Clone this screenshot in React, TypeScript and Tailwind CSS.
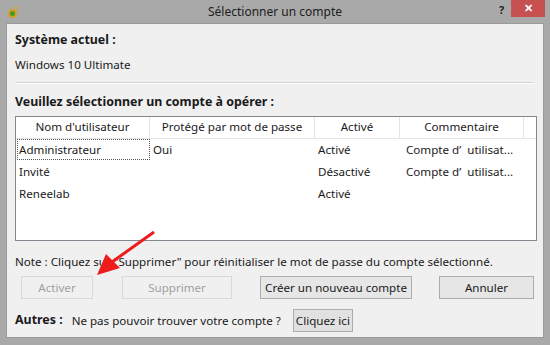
import React from 'react';

const cols = ['w-[134px]', 'w-[165px]', 'w-[85px]', 'w-[124px]'];

const rows = [
  { name: 'Administrateur', pwd: 'Oui', active: 'Activé', comment: 'Compte d’  utilisat...', focus: true },
  { name: 'Invité', pwd: '', active: 'Désactivé', comment: 'Compte d’  utilisat...' },
  { name: 'Reneelab', pwd: '', active: 'Activé', comment: '' },
];

function Btn({ children, disabled, className }: { children: React.ReactNode; disabled?: boolean; className: string }) {
  return (
    <div
      className={
        'h-[23px] flex items-center justify-center border whitespace-nowrap ' +
        (disabled ? 'border-[#d9d9d9] bg-[#f0f0f0] text-[#a0a0a0] ' : 'border-[#adadad] bg-[#e6e6e6] text-[#1a1a1a] ') +
        className
      }
    >
      {children}
    </div>
  );
}

export default function App() {
  return (
    <div
      className="w-[550px] h-[345px] bg-[#a9a9a9] flex flex-col relative overflow-hidden text-[11.6px] text-[#1a1a1a]"
      style={{ fontFamily: '"Noto Sans", "Open Sans", sans-serif' }}
    >
      {/* title bar */}
      <div className="h-[23px] flex items-center relative shrink-0">
        <div className="ml-[8px] mt-[1px] w-[12px] h-[12px] relative">
          <div className="absolute left-0 top-[3px] w-[9px] h-[9px] rounded-full bg-[#4a9a2a] border-2 border-[#d4a020]" />
          <div className="absolute left-[6px] top-0 w-[5px] h-[5px] rounded-full border border-[#d8a830]" />
        </div>
        <div className="absolute left-0 right-0 top-[3px] text-center text-[12px] text-[#202020]">Sélectionner un compte</div>
        <div className="absolute left-[499px] top-[2px] text-[11px] font-bold text-[#222]">?</div>
        <div className="absolute left-[511px] top-0 w-[34px] h-[17px] bg-[#c75050] flex items-center justify-center text-white text-[11px] font-bold">
          ✕
        </div>
      </div>

      {/* client area */}
      <div className="mx-[6px] mb-[7px] flex-1 bg-[#f0f0f0] border border-[#9a9a9a] flex flex-col px-[8px]">
        <div className="mt-[7px] font-bold text-[12.4px]">Système actuel :</div>
        <div className="mt-[6px]">Windows 10 Ultimate</div>
        <div className="mt-[9px] h-[2px] bg-[#d4d4d4] border-b border-white mr-[1px]" />
        <div className="mt-[9px] font-bold text-[12.4px]">Veuillez sélectionner un compte à opérer :</div>

        {/* list view */}
        <div className="mt-[4px] h-[125px] w-[522px] bg-white border border-[#828790] flex flex-col">
          <div className="h-[22px] flex border-b border-[#e5e5e5] shrink-0">
            {['Nom d\'utilisateur', 'Protégé par mot de passe', 'Activé', 'Commentaire'].map((h, i) => (
              <div key={h} className={cols[i] + ' border-r border-[#e5e5e5] flex items-center justify-center'}>
                {h}
              </div>
            ))}
          </div>
          {rows.map((r) => (
            <div key={r.name} className="h-[22px] flex items-center">
              <div className={cols[0] + ' h-full pl-[1px] flex items-center'}>
                <div
                  className={
                    'h-[21px] w-full flex items-center pl-[1px] ' +
                    (r.focus ? 'border border-dotted border-[#555]' : 'border border-transparent')
                  }
                >
                  {r.name}
                </div>
              </div>
              <div className={cols[1] + ' pl-[3px]'}>{r.pwd}</div>
              <div className={cols[2] + ' pl-[3px]'}>{r.active}</div>
              <div className={cols[3] + ' pl-[6px] whitespace-pre'}>{r.comment}</div>
            </div>
          ))}
        </div>

        <div className="mt-[12px]">Note : Cliquez sur "Supprimer" pour réinitialiser le mot de passe du compte sélectionné.</div>

        <div className="mt-[6px] flex">
          <Btn disabled className="ml-[6px] w-[72px]">Activer</Btn>
          <Btn disabled className="ml-[29px] w-[110px]">Supprimer</Btn>
          <Btn className="ml-[28px] w-[152px]">Créer un nouveau compte</Btn>
          <Btn className="ml-[27px] w-[95px]">Annuler</Btn>
        </div>

        <div className="mt-[10px] flex items-center">
          <span className="font-bold text-[12.4px]">Autres :</span>
          <span className="ml-[9px]">Ne pas pouvoir trouver votre compte ?</span>
          <Btn className="ml-[12px] w-[60px] !bg-[#e1e1e1]">Cliquez ici</Btn>
        </div>
      </div>

      {/* red annotation arrow */}
      <svg className="absolute left-0 top-0 pointer-events-none" width="550" height="345">
        <line x1="154" y1="232" x2="112" y2="262" stroke="#ee1c1c" strokeWidth="3" />
        <polygon points="97,275 106,254 120,268" fill="#ee1c1c" />
      </svg>
    </div>
  );
}
